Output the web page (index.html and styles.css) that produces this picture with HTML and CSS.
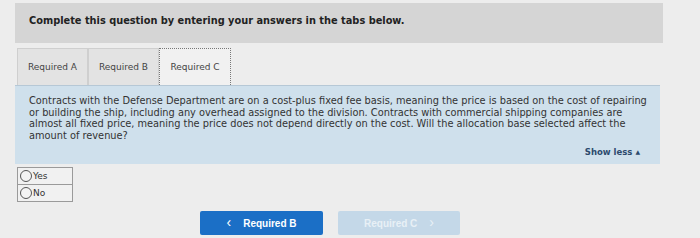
FILE: index.html
```html
<!DOCTYPE html>
<html lang="en">
<head>
    <meta charset="UTF-8">
    <title>Required C</title>
    <link rel="stylesheet" href="styles.css">
</head>
<body>
    <div class="page">
        <div class="instructions">Complete this question by entering your answers in the tabs below.</div>

        <div class="tabs">
            <div class="tab">Required A</div>
            <div class="tab">Required B</div>
            <div class="tab active">Required C</div>
        </div>

        <div class="question">
            <p>Contracts with the Defense Department are on a cost-plus fixed fee basis, meaning the price is based on the cost of repairing or building the ship, including any overhead assigned to the division. Contracts with commercial shipping companies are almost all fixed price, meaning the price does not depend directly on the cost. Will the allocation base selected affect the amount of revenue?</p>
            <div class="show-less">Show less <span class="arrow">&#9650;</span></div>
        </div>

        <div class="choices">
            <label class="choice"><span class="radio"></span>Yes</label>
            <label class="choice"><span class="radio"></span>No</label>
        </div>

        <div class="nav">
            <button class="nav-btn prev"><span class="chev">&lsaquo;</span>Required B</button>
            <button class="nav-btn next">Required C<span class="chev">&rsaquo;</span></button>
        </div>
    </div>
</body>
</html>
```

FILE: styles.css
```css
body {
    margin: 0;
    background: #ededed;
    font-family: "DejaVu Sans", Verdana, sans-serif;
    color: #333;
}
.page {
    width: 700px;
    height: 238px;
    padding-top: 3px;
    box-sizing: border-box;
}
.instructions {
    margin-left: 15px;
    width: 648px;
    height: 40px;
    box-sizing: border-box;
    padding: 12px 0 0 14px;
    background: #d5d5d5;
    font-size: 9.8px;
    font-weight: bold;
    color: #222;
}
.tabs {
    display: flex;
    margin: 5px 0 0 17px;
    height: 37px;
}
.tab {
    width: 71px;
    box-sizing: border-box;
    border: 1px solid #cfcfcf;
    border-bottom: none;
    background: #e3e3e3;
    font-size: 9px;
    color: #444;
    display: flex;
    align-items: center;
    justify-content: center;
}
.tab.active {
    width: 72px;
    background: #f1f1f1;
    border: 1px dotted #777;
    border-bottom: none;
}
.question {
    margin-left: 15px;
    width: 645px;
    height: 79px;
    box-sizing: border-box;
    padding: 9px 12px 0 14px;
    background: #cfe0ec;
    border-top: 1px solid #b6c8d6;
}
.question p {
    margin: 0;
    font-size: 9.8px;
    line-height: 11.5px;
    color: #333;
}
.show-less {
    margin-top: 6px;
    padding-right: 8px;
    text-align: right;
    font-size: 8.5px;
    font-weight: bold;
    color: #2c4a6c;
}
.arrow {
    font-size: 6px;
    vertical-align: 1px;
}
.choices {
    margin: 3px 0 0 17px;
    width: 54px;
    border: 1px solid #9a9a9a;
    background: #f1f1f1;
}
.choice {
    display: flex;
    align-items: center;
    height: 16px;
    font-size: 9px;
    color: #333;
}
.choice + .choice {
    border-top: 1px solid #9a9a9a;
}
.radio {
    width: 12px;
    height: 12px;
    box-sizing: border-box;
    border: 1.5px solid #555;
    border-radius: 50%;
    background: #f4f4f4;
    margin: 0 1px 0 2px;
}
.nav {
    display: flex;
    gap: 15px;
    margin: 9px 0 0 200px;
}
.nav-btn {
    width: 123px;
    height: 24px;
    border: none;
    border-radius: 2px;
    font-family: "Liberation Sans", Arial, sans-serif;
    font-size: 10px;
    font-weight: bold;
    color: #fff;
    display: flex;
    align-items: center;
    justify-content: center;
    gap: 12px;
}
.prev {
    background: #1b6fc6;
}
.next {
    width: 122px;
    background: #c4d8e8;
    color: #e8f0f6;
}
.chev {
    font-size: 14px;
    font-weight: normal;
    line-height: 1;
    margin-top: -2px;
}
```
